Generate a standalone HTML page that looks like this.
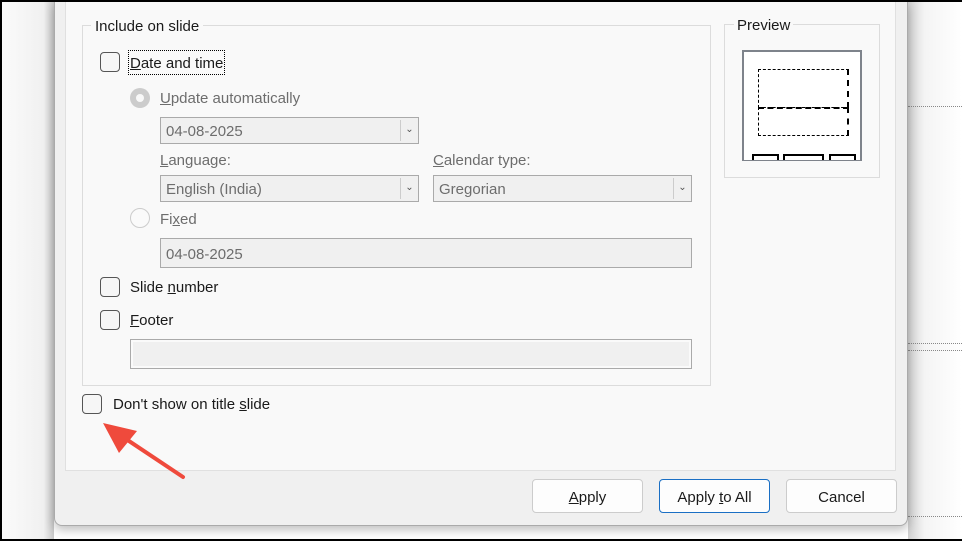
<!DOCTYPE html>
<html><head><style>
*{margin:0;padding:0;box-sizing:border-box}
body{width:962px;height:541px;background:#000;position:relative;overflow:hidden;font-family:"Segoe UI","Liberation Sans",sans-serif;font-size:15px;color:#1a1a1a}
.a{position:absolute}
.t{position:absolute;white-space:nowrap;line-height:24px}
.cb{position:absolute;width:20px;height:20px;border:1px solid #555;border-radius:4px;background:#f6f6f6}
.sel{position:absolute;border:1px solid #aaa;background:#f0f0f0;color:#6d6d6d;padding-left:5px;line-height:27px}
.sel .ar{position:absolute;right:0;top:2px;bottom:2px;width:18px;border-left:1px solid #ccc;font-size:10px;text-align:center;line-height:20px;color:#555}
.g{color:#6d6d6d}
.btn{position:absolute;top:479px;width:111px;height:34px;border:1px solid #ccc;border-radius:4px;background:#fdfdfd;text-align:center;line-height:35px}
u{text-decoration:underline}
</style></head><body>
<div class="a" style="left:2px;top:2px;width:960px;height:537px;background:#fff"></div>
<div class="a" style="left:2px;top:2px;width:52px;height:537px;background:linear-gradient(90deg,#fbfbfb,#f0f0f0 80%,#c8c8c8)"></div>
<div class="a" style="left:908px;top:2px;width:54px;height:537px;background:linear-gradient(90deg,#d0d0d0,#f4f4f4 30%,#fff)"></div>
<div class="a" style="left:908px;top:106px;width:54px;border-top:1px dotted #888"></div>
<div class="a" style="left:908px;top:343px;width:54px;border-top:1px dotted #888"></div>
<div class="a" style="left:908px;top:350px;width:54px;border-top:1px dotted #888"></div>
<div class="a" style="left:908px;top:516px;width:54px;border-top:1px dotted #888"></div>
<div class="a" style="left:54px;top:2px;width:854px;height:524px;background:#f0f0f0;border:1px solid #aaa;border-top:none;border-radius:0 0 8px 8px;box-shadow:0 4px 10px rgba(0,0,0,.25)"></div>
<div class="a" style="left:65px;top:2px;width:831px;height:469px;background:#f9f9f9;border:1px solid #e0e0e0;border-top:none"></div>
<div class="a" style="left:82px;top:25px;width:629px;height:361px;border:1px solid #dcdcdc"></div>
<div class="t" style="left:91px;top:15px;background:#f9f9f9;padding:0 4px">Include on slide</div>
<div class="cb" style="left:100px;top:52px"></div>
<div class="t" style="left:128px;top:50px;border:1px dotted #000;padding:0 1px;height:25px;line-height:25px"><u>D</u>ate and time</div>
<div class="a" style="left:130px;top:88px;width:20px;height:20px;border-radius:50%;background:#ccc"></div>
<div class="a" style="left:136px;top:94px;width:8px;height:8px;border-radius:50%;background:#f9f9f9"></div>
<div class="t g" style="left:160px;top:87px"><u>U</u>pdate automatically</div>
<div class="sel" style="left:160px;top:117px;width:259px;height:27px">04-08-2025<div class="ar">⌄</div></div>
<div class="t g" style="left:160px;top:149px"><u>L</u>anguage:</div>
<div class="t g" style="left:433px;top:149px"><u>C</u>alendar type:</div>
<div class="sel" style="left:160px;top:175px;width:259px;height:27px">English (India)<div class="ar">⌄</div></div>
<div class="sel" style="left:433px;top:175px;width:259px;height:27px">Gregorian<div class="ar">⌄</div></div>
<div class="a" style="left:130px;top:208px;width:20px;height:20px;border-radius:50%;border:1px solid #ccc;background:#fafafa"></div>
<div class="t g" style="left:160px;top:208px">Fi<u>x</u>ed</div>
<div class="sel" style="left:160px;top:238px;width:532px;height:30px;line-height:31px">04-08-2025</div>
<div class="cb" style="left:100px;top:277px"></div>
<div class="t" style="left:130px;top:276px">Slide <u>n</u>umber</div>
<div class="cb" style="left:100px;top:310px"></div>
<div class="t" style="left:130px;top:309px"><u>F</u>ooter</div>
<div class="a" style="left:130px;top:339px;width:562px;height:30px;border:1px solid #aaa;background:#f0f0f0;box-shadow:inset 0 0 0 2px #fafafa"></div>
<div class="a" style="left:724px;top:24px;width:156px;height:154px;border:1px solid #dcdcdc"></div>
<div class="t" style="left:734px;top:14px;background:#f9f9f9;padding:0 3px">Preview</div>
<div class="a" style="left:742px;top:50px;width:120px;height:111px;border:2px solid #7e838b;border-bottom-width:1px;background:#fff"></div>
<div class="a" style="left:758px;top:69px;width:91px;height:39px;border:1px dashed #000;border-right-width:2px"></div>
<div class="a" style="left:758px;top:107px;width:91px;height:29px;border:1px dashed #000;border-top-width:2px;border-right-width:2px"></div>
<div class="a" style="left:752px;top:154px;width:27px;height:6px;border:2px solid #000;border-bottom:none"></div>
<div class="a" style="left:783px;top:154px;width:41px;height:6px;border:2px solid #000;border-bottom:none"></div>
<div class="a" style="left:829px;top:154px;width:27px;height:6px;border:2px solid #000;border-bottom:none"></div>
<div class="cb" style="left:82px;top:394px"></div>
<div class="t" style="left:113px;top:393px">Don't show on title <u>s</u>lide</div>
<svg class="a" style="left:95px;top:415px" width="100" height="70"><line x1="88" y1="62" x2="22" y2="18" stroke="#ef4a3c" stroke-width="4" stroke-linecap="round"/><polygon points="8,8 42,16 24,38" fill="#ef4a3c"/></svg>
<div class="btn" style="left:532px"><u>A</u>pply</div>
<div class="btn" style="left:659px;border:1px solid #1a6fc4">Apply <u>t</u>o All</div>
<div class="btn" style="left:786px">Cancel</div>
</body></html>
